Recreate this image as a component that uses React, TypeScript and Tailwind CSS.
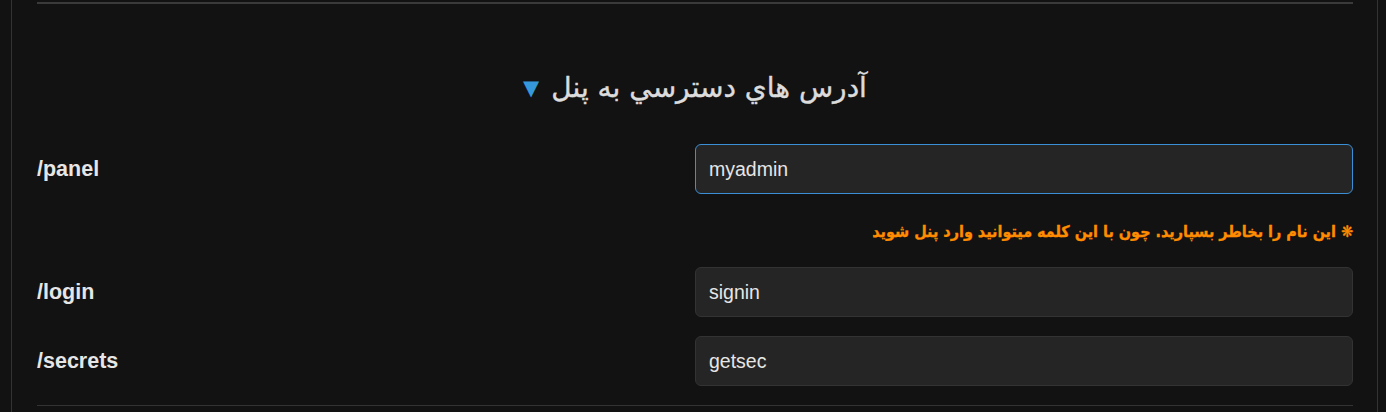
const rows = [
  { path: '/panel', value: 'myadmin', focused: true },
  { path: '/login', value: 'signin', focused: false },
  { path: '/secrets', value: 'getsec', focused: false },
];

const Row = ({ path, value, focused }: { path: string; value: string; focused: boolean }) => (
  <div className="grid grid-cols-2 items-center">
    <label className="text-[21.5px] font-bold text-[#e6e6e6] [font-family:'Liberation_Sans',Arial,sans-serif]">
      {path}
    </label>
    <input
      defaultValue={value}
      spellCheck={false}
      className={
        'h-[50px] w-full rounded-[6px] border bg-[#252525] px-[13px] text-[19.5px] text-[#e6e6e6] outline-none [font-family:"Liberation_Sans",Arial,sans-serif] ' +
        (focused ? 'border-[#3b8fd6]' : 'border-[#333333]')
      }
    />
  </div>
);

export default function App() {
  return (
    <div className="h-[412px] w-full overflow-hidden bg-[#121212]">
      <div className="ml-[11px] h-full w-[1367px] border-x border-[#333333] pl-[25px] pr-[24px]">
        <div className="pt-[2px]">
          <div className="h-[2px] bg-[#3a3a3a]" />
        </div>

        <h2
          dir="rtl"
          className="mt-[66px] mb-[38px] flex items-center justify-center gap-[12px] text-[28px] leading-[36px] text-[#dcdcdc] [font-family:'DejaVu_Sans',sans-serif]"
        >
          <span className="[-webkit-text-stroke:0.4px_#dcdcdc]">آدرس هاي دسترسي به پنل</span>
          <span className="text-[21px] text-[#3498db]">▼</span>
        </h2>

        <Row {...rows[0]} />

        <p
          dir="rtl"
          className="mt-[26px] mb-[23px] text-[16px] font-bold leading-[24px] text-[#ff8c00] [-webkit-text-stroke:0.3px_#ff8c00] [font-family:'DejaVu_Sans_Condensed','DejaVu_Sans',sans-serif]"
        >
          ❋ اين نام را بخاطر بسپاريد. چون با اين كلمه ميتوانيد وارد پنل شويد
        </p>

        <div className="flex flex-col gap-[19px]">
          <Row {...rows[1]} />
          <Row {...rows[2]} />
        </div>

        <div className="mt-[19px] h-px bg-[#333333]" />
      </div>
    </div>
  );
}
